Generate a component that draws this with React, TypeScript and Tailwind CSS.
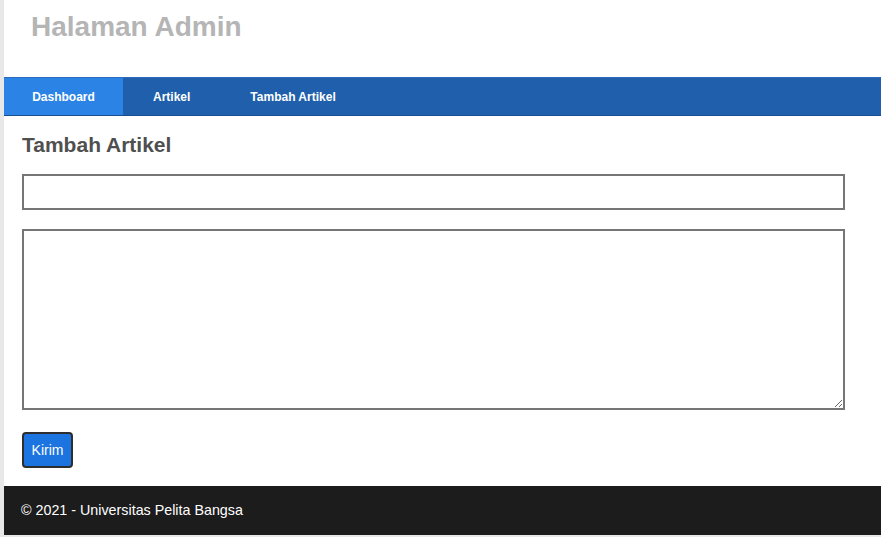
export default function App() {
  return (
    <div className="flex min-h-[537px] bg-[#e8e8e8] font-['Liberation_Sans',Arial,sans-serif]">
      <div className="w-[4px] shrink-0" />
      <div className="flex flex-1 flex-col bg-white mb-[2px]">
        {/* Header */}
        <header className="h-[77px] pl-[27px] pt-[11px]">
          <h1 className="text-[28px] font-bold leading-[32px] text-[#b5b5b5]">Halaman Admin</h1>
        </header>

        {/* Nav */}
        <nav className="flex h-[39px] items-stretch bg-[#1f5fab] border-t border-[#2a6cba] border-b border-b-[#1a4f8f]">
          <a className="flex w-[119px] items-center justify-center bg-[#2b83e6] pt-[1px] text-[12px] font-bold text-white">
            Dashboard
          </a>
          <a className="flex items-center px-[30px] pt-[1px] text-[12px] font-bold text-white">Artikel</a>
          <a className="flex items-center px-[30px] pt-[1px] text-[12px] font-bold text-white">Tambah Artikel</a>
        </nav>

        {/* Content */}
        <main className="flex flex-col pl-[18px] pt-[17px]">
          <h2 className="text-[21px] font-bold leading-[24px] text-[#4f4f4f]">Tambah Artikel</h2>
          <input
            type="text"
            className="mt-[17px] h-[36px] w-[823px] border-2 border-[#767676] bg-white outline-none"
          />
          <textarea className="mt-[19px] h-[181px] w-[823px] border-2 border-[#767676] bg-white outline-none" />
          <div className="mt-[22px]">
            <button className="h-[36px] w-[51px] rounded-[4px] border-2 border-[#2e2e2e] bg-[#1b74df] text-[14px] text-white">
              Kirim
            </button>
          </div>
        </main>

        {/* Footer */}
        <footer className="mt-[18px] flex h-[49px] items-center bg-[#1c1c1c] pl-[17px] text-[14.3px] text-white">
          © 2021 - Universitas Pelita Bangsa
        </footer>
      </div>
    </div>
  )
}
